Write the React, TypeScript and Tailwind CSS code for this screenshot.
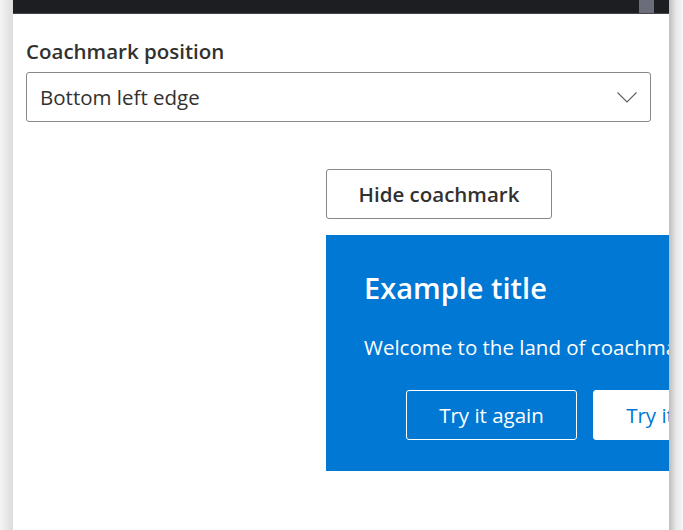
export default function App() {
  return (
    <div
      className="flex h-[530px] w-[683px] overflow-hidden bg-white"
      style={{ fontFamily: '"Open Sans", "Noto Sans", sans-serif' }}
    >
      <div className="w-[13px] shrink-0 bg-gradient-to-r from-[#f4f4f4] to-[#dcdcdc]" />
      <div className="flex w-[656px] shrink-0 flex-col overflow-hidden bg-white">
        <div className="flex h-[14px] shrink-0 border-b border-[#45464c] bg-[#1d1e22]">
          <div className="ml-[626px] h-full w-[15px] bg-[#6b6e7a]" />
        </div>

        <div className="px-[13px] pt-[23px]">
          <label className="block text-[20.5px] font-semibold leading-[28px] text-[#323130]">
            Coachmark position
          </label>
          <div className="mt-[7px] flex h-[50px] w-[625px] items-center justify-between rounded-[3px] border border-[#8a8886] pl-[13px] pr-[13px]">
            <span className="text-[20.5px] text-[#323130]">Bottom left edge</span>
            <svg width="20" height="11" viewBox="0 0 20 11" fill="none" className="text-[#605e5c]">
              <path d="M0.5 0.5 L10 10 L19.5 0.5" stroke="currentColor" strokeWidth="1.1" />
            </svg>
          </div>
        </div>

        <div className="mt-[47px] pl-[313px]">
          <button className="flex h-[50px] w-[226px] items-center justify-center rounded-[3px] border border-[#8a8886] bg-white text-[20.5px] font-semibold text-[#323130]">
            Hide coachmark
          </button>
        </div>

        <div className="ml-[313px] mt-[16px] h-[236px] w-[500px] shrink-0 bg-[#0078d4] pl-[38px] pt-[33px] text-white">
          <h2 className="text-[29px] font-semibold leading-[40px] whitespace-nowrap">Example title</h2>
          <p className="mt-[25px] text-[20.5px] leading-[28px] whitespace-nowrap">
            Welcome to the land of coachmarks!
          </p>
          <div className="mt-[29px] flex gap-[16px] pl-[42px]">
            <button className="flex h-[50px] w-[171px] items-center justify-center rounded-[3px] border border-white text-[20.5px] text-white">
              Try it again
            </button>
            <button className="flex h-[50px] w-[171px] items-center justify-center rounded-[3px] border border-white bg-white text-[20.5px] text-[#0078d4]">
              Try it again
            </button>
          </div>
        </div>
      </div>
      <div className="w-[14px] shrink-0 bg-gradient-to-r from-[#bdbdbd] via-[#e8e8e8] to-[#f6f6f6]" />
    </div>
  );
}
